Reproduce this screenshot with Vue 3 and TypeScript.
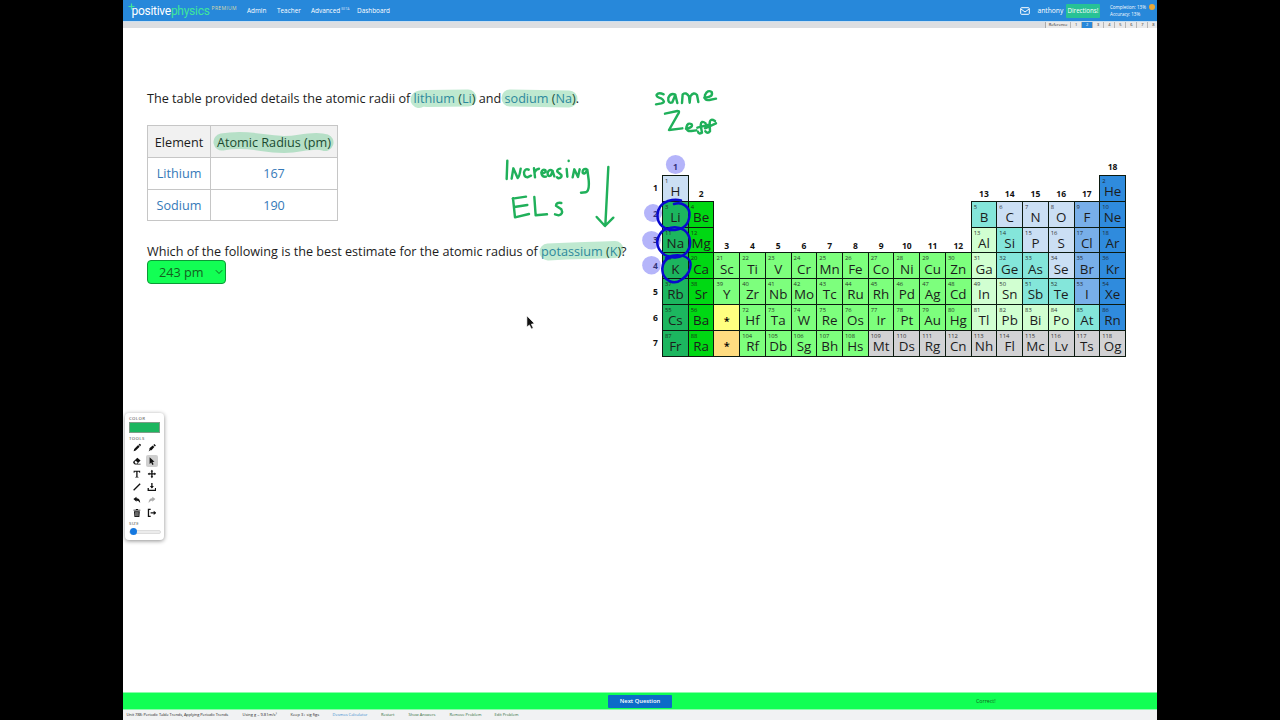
<script setup lang="ts">
interface Cell {
  n: number
  s: string
  row: number
  col: number
  kind: string
}

// Symbols by period; '.' leaves a gap, '*' marks a series placeholder
const periods: string[] = [
  'H . . . . . . . . . . . . . . . . He',
  'Li Be . . . . . . . . . . B C N O F Ne',
  'Na Mg . . . . . . . . . . Al Si P S Cl Ar',
  'K Ca Sc Ti V Cr Mn Fe Co Ni Cu Zn Ga Ge As Se Br Kr',
  'Rb Sr Y Zr Nb Mo Tc Ru Rh Pd Ag Cd In Sn Sb Te I Xe',
  'Cs Ba * Hf Ta W Re Os Ir Pt Au Hg Tl Pb Bi Po At Rn',
  'Fr Ra * Rf Db Sg Bh Hs Mt Ds Rg Cn Nh Fl Mc Lv Ts Og',
]
const starts = [1, 3, 11, 19, 37, 55, 87]
const metalloids = ['B', 'Si', 'Ge', 'As', 'Sb', 'Te', 'At']
const nonmetals = ['H', 'C', 'N', 'O', 'P', 'S', 'Se']

function kindOf(s: string, row: number, col: number): string {
  if (s === '*') return row === 6 ? 'lan' : 'act'
  if (nonmetals.includes(s)) return 'nonmetal'
  if (metalloids.includes(s)) return 'metalloid'
  if (row === 7 && col > 8) return 'unknown'
  if (col === 1) return 'alkali'
  if (col === 2) return 'earth'
  if (col === 18) return 'noble'
  if (col === 17) return 'halogen'
  return col > 12 ? 'post' : 'transition'
}

const cells: Cell[] = []
periods.forEach((line, i) => {
  let n = starts[i]
  line.split(' ').forEach((s, j) => {
    if (s === '.') return
    cells.push({ n, s, row: i + 1, col: j + 1, kind: kindOf(s, i + 1, j + 1) })
    // A placeholder stands for fifteen elements
    n += s === '*' ? 15 : 1
  })
})

const groups = Array.from({ length: 18 }, (_, i) => {
  const g = i + 1
  const row = g === 1 || g === 18 ? 1 : g === 2 || g > 12 ? 2 : 4
  return { g, row }
})
const pages = [1, 2, 3, 4, 5, 6, 7, 8]
const navLinks = ['Restart', 'Show Answers', 'Remove Problem', 'Edit Problem']
</script>

<template>
  <div class="screen">
    <div class="page">
      <header class="top">
        <div class="logo">
          <svg class="plus" viewBox="0 0 8 8"><path d="M4 0.6V7.4M0.6 4H7.4" /></svg>
          <span class="w1">positive</span><span class="w2">physics</span><sup class="prem">PREMIUM</sup>
        </div>
        <nav class="menu">
          <span class="m1">Admin</span>
          <span class="m2">Teacher</span>
          <span class="m3">Advanced<sup>BETA</sup></span>
          <span class="m4">Dashboard</span>
        </nav>
        <svg class="mail" viewBox="0 0 10 8"><rect x="0.7" y="0.7" width="8.6" height="6.6" rx="0.8" /><path d="M1 2L5 5L9 2" /></svg>
        <span class="user">anthony</span>
        <span class="dir">Directions!</span>
        <div class="stats"><span>Completion: 13%</span><span>Accuracy: 13%</span></div>
        <i class="dot"></i>
      </header>
      <div class="tabs">
        <span class="ref">Reference</span>
        <span v-for="p in pages" :key="p" class="tab" :class="{ on: p === 2 }">{{ p }}</span>
      </div>

      <main class="body">
        <section class="question">
          <p class="line q1">The table provided details the atomic radii of <b>lithium</b> (<b>Li</b>) and <b>sodium</b> (<b>Na</b>).</p>
          <table class="data">
            <thead><tr><th class="c1">Element</th><th class="c2">Atomic Radius (pm)</th></tr></thead>
            <tbody>
              <tr><td>Lithium</td><td>167</td></tr>
              <tr><td>Sodium</td><td>190</td></tr>
            </tbody>
          </table>
          <p class="line q2">Which of the following is the best estimate for the atomic radius of <b>potassium</b> (<b>K</b>)?</p>
          <div class="select">
            <span>243 pm</span>
            <svg viewBox="0 0 8 6"><path d="M0.8 1.2L4 4.5L7.2 1.2" /></svg>
          </div>
        </section>

        <section class="ptable">
          <span v-for="g in groups" :key="'g' + g.g" class="group" :class="{ low: g.row > 1 }" :style="{ gridColumn: g.g + 1, gridRow: g.row }">{{ g.g }}</span>
          <span v-for="r in 7" :key="'r' + r" class="period" :style="{ gridRow: r + 1 }">{{ r }}</span>
          <div v-for="c in cells" :key="c.row + '-' + c.col" class="cell" :class="c.kind" :style="{ gridColumn: c.col + 1, gridRow: c.row + 1 }">
            <span v-if="c.s !== '*'" class="num">{{ c.n }}</span>
            <span class="sym">{{ c.s }}</span>
          </div>
        </section>
      </main>

      <div class="result">
        <span class="next">Next Question</span>
        <span class="correct">Correct!</span>
      </div>
      <footer class="foot">
        <span class="f0">Unit 788: Periodic Table Trends, Applying Periodic Trends</span>
        <span class="f1">Using g = 9.81m/s²</span>
        <span class="f2">Keep 3+ sig figs</span>
        <span class="f3">Desmos Calculator</span>
        <span v-for="(l, i) in navLinks" :key="l" class="fl" :class="'l' + i">{{ l }}</span>
      </footer>
    </div>

    <svg class="ink" viewBox="0 0 1280 720">
      <g class="marker">
        <path d="M419 99.5Q421 98 427 98.500L468 98" />
        <path d="M510 98L540 98.600L569 99" />
        <path d="M222 142Q240 139 262 142.500T300 143Q318 140 325 142.500" />
        <path d="M548 252Q565 251 585 250.500T615 249.500" />
      </g>
      <g class="dots">
        <circle cx="675.500" cy="164.500" r="9.600" /><circle cx="653" cy="213" r="9" />
        <circle cx="651.500" cy="240.200" r="9.300" /><circle cx="651.500" cy="265.200" r="9.300" />
      </g>
      <g class="rings">
        <path d="M668 201Q675 199 681 200.500M674 204C682 201 690 207 689.500 215C689 224 685 229 675 230C665 231 657 224 657.500 215C658 207 662 203 668 201" />
        <path d="M667 229Q676 225 684 230C691 235 692 246 687 252C682 258 672 259 665 255C657 250 655 241 660 234Q663 229 671 228" />
        <path d="M666 258C674 254 686 254 690 261C692 268 688 276 681 280C674 285 666 281 663 274C661 266 663 260 671 257" />
      </g>
      <g class="pen" transform="translate(500 152) scale(.33333)">
        <path d="M22 26L20 81M35 80L40 49L53 78Q58 76 62 50M86 53Q76 48 72 61Q72 76 82 76L93 71M102 49L105 76M104 61Q108 51 117 50M128 64Q140 61 136 54Q127 50 124 62Q125 76 138 74M158 57Q148 49 143 62Q142 75 152 71L158 58L163 73M181 50Q170 52 172 59L184 69Q187 77 175 79L171 76M200 51L202 74M206 26L206 27M218 76L223 52L234 75L239 52M258 51Q247 50 248 62Q254 70 262 53L266 84Q269 117 257 121L243 122" />
        <path d="M39 139L45 196M38 140L78 134M43 165L82 159M45 196L87 186M103 135L107 190L141 187M184 153Q169 150 168 161L184 172Q191 187 176 190L165 187" />
        <path d="M325 45L316 220M290 195L315 222L340 197" />
      </g>
      <g class="pen" transform="translate(645 80) scale(.33333)">
        <path d="M56 43Q41 36 35 44Q32 50 48 55Q65 66 49 70L33 73M91 44Q77 38 70 53Q68 72 82 67L91 45L97 69M111 69L113 43Q123 35 132 49L134 68L136 49Q146 34 156 45L160 66M178 53Q206 52 200 36Q188 28 180 45Q176 63 193 60L213 56" />
        <path d="M60 101L97 93Q107 93 97 106L72 150L112 145M123 146Q145 142 140 133Q128 126 124 142Q125 155 139 153L154 151M182 130Q168 119 167 136L171 158Q160 164 159 155M157 143L189 135M210 123Q194 113 194 131L195 154Q188 163 181 154M180 145L213 130" />
      </g>
      <path class="cursor" d="M526.900 316V327L529.400 324.900L531.500 329L533.200 328.100L531.300 324.200L534.200 323.600Z" />
    </svg>

    <aside class="tools">
      <h6 class="lab">COLOR</h6>
      <div class="swatch"></div>
      <h6 class="lab">TOOLS</h6>
      <div class="icons">
        <span><svg viewBox="0 0 12 12"><path class="f" d="M2 10L2.700 7.400L7.500 2.600L9.400 4.500L4.600 9.300ZM8.100 2L9 1.200Q9.700 .8 10.400 1.600Q11.200 2.300 10.700 3L10 3.900Z" /></svg></span>
        <span><svg viewBox="0 0 12 12"><path class="f" d="M2 10.500L3 8L3 6.500L7 3L9 5L5.500 9L4 9ZM7.700 2.300L9 1.200L10.900 3.100L9.700 4.400Z" /></svg></span>
        <span><svg viewBox="0 0 12 12"><path class="f" d="M1.500 7L6.500 2L10.500 5.500L6.500 9.500H10.500V10.500H3.500L1.500 8.500Z" /><path class="w" d="M3.100 7.300L4.600 5.800L6.900 8.100L5.500 9.400H4.500Z" /></svg></span>
        <span class="sel"><svg viewBox="0 0 12 12"><path class="f" d="M3.200 1.500V9.700L5.100 8L6.600 11L8.100 10.200L6.700 7.400L9.200 7.100Z" /></svg></span>
        <span><svg viewBox="0 0 12 12"><path class="f" d="M2 2H10V4.500H9L8.700 3.300H6.800V9.400L8 9.700V10.500H4V9.700L5.200 9.400V3.300H3.300L3 4.500H2Z" /></svg></span>
        <span><svg viewBox="0 0 12 12"><path class="s" d="M6 2V10M2 6H10" /><path class="f" d="M6 .8L7.600 3H4.400ZM6 11.200L4.400 9H7.600ZM.8 6L3 4.400V7.600ZM11.200 6L9 7.600V4.400Z" /></svg></span>
        <span><svg viewBox="0 0 12 12"><path class="s" d="M2 10L10 2.200" /></svg></span>
        <span><svg viewBox="0 0 12 12"><path class="s" d="M6 1.200V7M1.500 7.500V10.300H10.500V7.500" /><path class="f" d="M3.600 5H8.400L6 8Z" /></svg></span>
        <span><svg viewBox="0 0 12 12"><path class="f" d="M1.700 5L5.500 2V4Q10 4 10 9.800Q8.500 6.600 5.500 6.600V8.200Z" /></svg></span>
        <span class="dim"><svg viewBox="0 0 12 12"><path class="f" d="M10.300 5L6.500 2V4Q2 4 2 9.800Q3.500 6.600 6.500 6.600V8.200Z" /></svg></span>
        <span><svg viewBox="0 0 12 12"><path class="f" d="M1.800 2H4.500L5 1.200H7.200L7.600 2H10.200V3.200H1.800ZM2.400 4H9.600L9 11H3Z" /><path class="ws" d="M4.600 5V10M6 5V10M7.400 5V10" /></svg></span>
        <span><svg viewBox="0 0 12 12"><path class="s" d="M4.500 1.800H1.800V10.200H4.500M4.400 6H9" /><path class="f" d="M8.200 3.300L11.500 6L8.200 8.700Z" /></svg></span>
      </div>
      <h6 class="lab">SIZE</h6>
      <div class="slider"><i></i></div>
    </aside>
  </div>
</template>

<style>
body { margin: 0; background: #000; overflow: hidden; }
</style>

<style scoped>
* { box-sizing: border-box; }
.screen { position: relative; width: 1280px; height: 720px; background: #000; display: flex; justify-content: center; font-family: "Open Sans", "Noto Sans", sans-serif; color: #1c1c1c; }
.page { width: 1034px; height: 720px; background: #fff; display: flex; flex-direction: column; overflow: hidden; }
.top { height: 21px; flex: none; background: #2788da; color: #fff; display: flex; align-items: center; padding: 0 2px 0 5px; white-space: nowrap; }
.logo { display: flex; align-items: center; flex: none; width: 119px; font: 12px/20px Roboto, "Open Sans", sans-serif; letter-spacing: -.28px; }
.plus { width: 7px; height: 7px; flex: none; margin: -9px -3.500px 0 0; overflow: visible; }
.plus path { stroke: #3fe69a; stroke-width: 1.400; }
.w2 { color: #3fe69a; }
.prem { font: 5px/6px "Open Sans", sans-serif; color: #d9d9a8; letter-spacing: .35px; margin: -6px 0 0 2px; }
.menu { display: flex; font-size: 6.400px; line-height: 20px; flex: 1; }
.m1 { width: 30px; }
.m2 { width: 34px; }
.m3 { width: 46px; }
.menu sup { font-size: 3.500px; color: #c7dff5; margin-left: 1px; vertical-align: 3px; line-height: 1; }
.mail { width: 10px; height: 8px; fill: none; stroke: #fff; stroke-width: 1; }
.user { font-size: 6.700px; width: 37px; padding-left: 7.500px; }
.dir { width: 34px; height: 14px; background: #27c295; border-radius: 1px; font-size: 6.200px; line-height: 14px; text-align: center; margin-left: -1px; }
.stats { display: flex; flex-direction: column; font-size: 4.550px; line-height: 7px; width: 39px; margin-left: 10px; }
.dot { width: 6px; height: 6px; border-radius: 50%; background: #e9a735; margin: -7px 0 0 0; }
.tabs { height: 7px; flex: none; display: flex; justify-content: flex-end; background: #dcdee1; border-top: 1px solid #c8dff2; font-size: 4px; line-height: 6px; margin-right: -1.500px; }
.ref { width: 25px; text-align: center; border-left: 1px solid #aaa; background: #e9e9e9; }
.tab { width: 11.050px; text-align: center; border-left: 1px solid #b5b5b5; background: #eaeaea; }
.tab.on { background: #2788da; color: #fff; }
.body { flex: 1; display: flex; padding: 0 0 0 24px; }
.question { width: 502px; padding-top: 59.500px; }
.line { margin: 0; font-size: 12.650px; line-height: 20px; white-space: nowrap; }
.line b, td { font-weight: 400; color: #3579b8; }
.data { border-collapse: collapse; margin: 17.500px 0 19.500px; font-size: 12.650px; text-align: center; table-layout: fixed; width: 191px; }
.data th, .data td { border: 1px solid #c6c6c6; padding: 0; height: 31.500px; }
.data th { font-weight: 400; background: #f1f1f1; height: 32px; white-space: nowrap; }
.c1 { width: 63px; }
.select { width: 79px; height: 24px; margin-top: -.500px; background: #12ff54; border: 1px solid #0c9a36; border-radius: 4px; display: flex; align-items: center; justify-content: space-between; padding: 0 2px 0 11px; font-size: 12.700px; color: #14611f; }
.select svg { width: 8px; height: 6px; fill: none; stroke: #146b22; stroke-width: 1; }
.ptable { display: grid; grid-template-columns: 13px repeat(18, 25.720px); grid-template-rows: 15px repeat(7, 25.860px); align-content: start; padding-top: 131.800px; }
.group { align-self: end; text-align: center; font: 700 8.500px/16px "Open Sans", sans-serif; color: #111; padding-left: 1px; margin-bottom: -.700px; }
.group.low { margin-bottom: -1.200px; }
.period { grid-column: 1; align-self: center; text-align: center; font: 700 8.500px/16px "Open Sans", sans-serif; color: #111; padding-top: 1px; }
.cell { border: 1px solid #0c1a10; margin: 0 -1px -1px 0; position: relative; display: flex; justify-content: center; }
.num { position: absolute; left: 2px; top: 2px; font-size: 5.800px; line-height: 6px; opacity: .9; }
.sym { font-size: 13.400px; line-height: 13px; padding-top: 9.200px; }
.lan .sym, .act .sym { padding-top: 8.500px; color: #000; font-size: 11px; font-weight: 600; }
.alkali { background: #1cb65f; }
.earth { background: #00d813; }
.transition { background: #7dff7d; }
.post { background: #d1ffd1; }
.metalloid { background: #84e6da; }
.nonmetal { background: #cbdff4; }
.halogen { background: #78afe9; }
.noble { background: #2f8bdd; }
.unknown { background: #d2d2d4; }
.lan { background: #ffff80; }
.act { background: #ffdc80; }
.result { height: 18px; flex: none; background: #12ff54; display: flex; align-items: center; padding-left: 485px; border-top: 1px solid #8dfcac; border-bottom: 1px solid #8dfcac; }
.next { width: 64px; height: 13px; background: #0c6bc8; border-radius: 1px; color: #fff; font-weight: 600; font-size: 5.800px; line-height: 13px; text-align: center; }
.correct { margin-left: 304px; font-size: 5.300px; color: #14611f; }
.foot { height: 10px; flex: none; background: #f1f2f3; display: flex; font-size: 4px; line-height: 10px; white-space: nowrap; padding-left: 3.500px; }
.f0 { width: 116px; letter-spacing: -.08px; }
.f1 { width: 48px; }
.f2 { width: 42px; }
.f3 { width: 48.500px; color: #3c8ccf; }
.fl { color: #2f6b3a; }
.l0 { width: 27.500px; }
.l1 { width: 41px; }
.l2 { width: 45px; }
.ink { position: absolute; inset: 0; width: 1280px; height: 720px; fill: none; stroke-linecap: round; stroke-linejoin: round; pointer-events: none; }
.marker { stroke: #1cb25a; stroke-width: 17; opacity: .28; }
.dots { fill: #5a5af5; opacity: .45; }
.rings { stroke: #0909cf; stroke-width: 2.500; }
.pen { stroke: #20b05a; stroke-width: 7.300; }
.cursor { fill: #111; stroke: #fff; stroke-width: .6; }
.tools { position: absolute; left: 125px; top: 413px; width: 39px; height: 127px; background: #fff; border-radius: 4px; box-shadow: 0 1px 4px rgba(0, 0, 0, .45); padding: 3px 4px; }
.lab { margin: 0; font: 600 4.300px/5px "Open Sans", sans-serif; letter-spacing: .35px; color: #777; }
.swatch { height: 11px; width: 31px; background: #1cb65f; border: 1px solid #7f9c88; margin: 1px 0 3px; }
.icons { display: grid; grid-template-columns: 15px 15px; grid-template-rows: repeat(6, 13px); padding-left: .5px; margin-top: .5px; }
.icons span { display: flex; align-items: center; justify-content: center; width: 12px; height: 12px; margin: .8px 1px 0; border-radius: 2px; }
.icons svg { width: 9.800px; height: 9.800px; }
.icons .sel { background: #cfcfcf; }
.dim { opacity: .35; }
.f { fill: #111; }
.w { fill: #fff; }
.s { fill: none; stroke: #111; stroke-width: 1.600; }
.ws { fill: none; stroke: #fff; stroke-width: .6; }
.icons + .lab { margin-top: 1px; }
.slider { height: 4px; width: 32px; background: #ececec; border: 1px solid #ddd; border-radius: 2px; margin-top: 4px; display: flex; align-items: center; }
.slider i { width: 7px; height: 7px; border-radius: 50%; background: #1478e0; flex: none; }
</style>
